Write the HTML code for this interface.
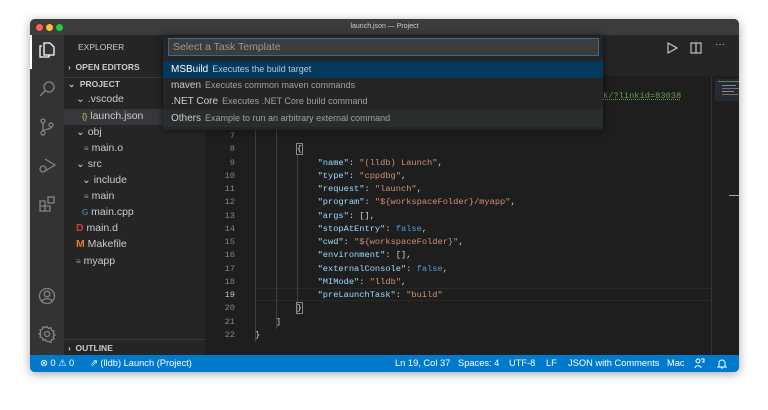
<!DOCTYPE html>
<html><head><meta charset="utf-8"><style>
*{margin:0;padding:0;box-sizing:border-box}
body{width:768px;height:410px;background:#fff;position:relative;overflow:hidden;font-family:"Liberation Sans",sans-serif}
.win{position:absolute;left:30px;top:19px;width:709px;height:353px;background:#1e1e1e;border-radius:5px;overflow:hidden;box-shadow:0 2px 10px rgba(0,0,0,.35)}
.title{position:absolute;left:0;top:0;width:100%;height:16px;background:#3c3c3c;color:#ccc;font-size:7px;text-align:center;line-height:16px}
.dot{position:absolute;top:5px;width:7px;height:7px;border-radius:50%}
.act{position:absolute;left:0;top:16px;width:34px;height:320px;background:#333}
.act svg{position:absolute;left:8px}
.side{position:absolute;left:34px;top:16px;width:141px;height:320px;background:#252526;color:#ccc;font-size:10.5px}
.side div{position:absolute;white-space:nowrap}
.b{font-weight:bold;font-size:8.5px}
.tabs{position:absolute;left:175px;top:16px;width:534px;height:41px;background:#252526}
.ed{position:absolute;left:175px;top:57px;width:534px;height:279px;background:#1e1e1e}
.code{position:absolute;font-family:"Liberation Mono",monospace;font-size:8.7px;white-space:pre;line-height:13.27px}
.ln{color:#858585;text-align:right;width:30px}
.k{color:#9cdcfe}.s{color:#ce9178}.f{color:#569cd6}.p{color:#d4d4d4}
.status{position:absolute;left:0;top:336px;width:100%;height:17px;background:#007acc;color:#fff;font-size:9.3px;line-height:17px}
.status span{position:absolute;white-space:nowrap}
.qp{position:absolute;left:133px;top:17px;width:440px;height:94px;background:#252526;box-shadow:0 0 8px rgba(0,0,0,.6);font-size:10px;color:#ccc}
.qp .in{position:absolute;left:5px;top:2px;width:431px;height:18px;background:#3c3c3c;border:1px solid #3a6a8a;color:#999;line-height:16px;padding-left:4px;font-size:10.5px}
.qp .it{position:absolute;left:0;width:440px;height:16.5px;line-height:16.5px;padding-left:8px}
.qp .it i{font-style:normal;color:#a0a0a0;font-size:9px;margin-left:4px}
.btn{position:absolute;left:541px;top:291px;width:100px;height:27px;background:#0e639c;color:#fff;font-size:10px;text-align:center;line-height:27px}
</style></head><body>
<div class="win">
<div class="title">launch.json — Project
<div class="dot" style="left:6px;background:#fe5f57"></div><div class="dot" style="left:16px;background:#febc2e"></div><div class="dot" style="left:26px;background:#28c840"></div></div>
<div class="act">
<div style="position:absolute;left:0;top:0;width:2px;height:34px;background:#fff"></div>
<svg style="top:6px" width="18" height="18" viewBox="0 0 18 18" fill="none" stroke="#fff" stroke-width="1.3"><path d="M6 2h6l4 4v8H6z M4 5H2v11h9v-2"/></svg>
<svg style="top:45px" width="18" height="18" viewBox="0 0 18 18" fill="none" stroke="#858585" stroke-width="1.3"><circle cx="11" cy="7" r="5"/><path d="M7.5 10.5L2 16"/></svg>
<svg style="top:83px" width="18" height="18" viewBox="0 0 18 18" fill="none" stroke="#858585" stroke-width="1.3"><circle cx="5" cy="3" r="2"/><circle cx="5" cy="15" r="2"/><circle cx="13" cy="7" r="2"/><path d="M5 5v8M13 9c0 3-8 2-8 4"/></svg>
<svg style="top:121px" width="18" height="18" viewBox="0 0 18 18" fill="none" stroke="#858585" stroke-width="1.3"><path d="M7 3l10 6-10 6"/><circle cx="5" cy="13" r="3"/></svg>
<svg style="top:160px" width="18" height="18" viewBox="0 0 18 18" fill="none" stroke="#858585" stroke-width="1.3"><path d="M2 6h5v5H2zM2 11h5v5H2zM7 11h5v5H7z"/><rect x="10" y="2" width="6" height="6"/></svg>
<svg style="top:252px" width="18" height="18" viewBox="0 0 18 18" fill="none" stroke="#858585" stroke-width="1.3"><circle cx="9" cy="9" r="7.5"/><circle cx="9" cy="7" r="2.8"/><path d="M4 14c2-3 8-3 10 0"/></svg>
<svg style="top:290px" width="18" height="18" viewBox="0 0 18 18" fill="none" stroke="#858585" stroke-width="1.3"><circle cx="9" cy="9" r="2.5"/><path d="M9 1.5l1.5 2 2.5-.8.5 2.5 2.5.8-.8 2.5 1.8 1.5-1.8 1.5.8 2.5-2.5.8-.5 2.5-2.5-.8L9 16.5l-1.5-2-2.5.8-.5-2.5-2.5-.8.8-2.5L1 9l1.8-1.5L2 5l2.5-.8.5-2.5 2.5.8z"/></svg>
</div>
<div class="side">
<div style="left:14px;top:7px;font-size:8.5px">EXPLORER</div>
<div class="b" style="left:4px;top:27px">›&nbsp; OPEN EDITORS</div>
<div style="left:0;top:42px;width:141px;height:1px;background:#3a3a3a"></div>
<div class="b" style="left:4px;top:44px">⌄&nbsp; PROJECT</div>
<div style="left:12px;top:58px">⌄ .vscode</div>
<div style="left:0;top:74px;width:141px;height:16px;background:#37373d"></div>
<div style="left:18px;top:75px"><span style="color:#cbcb41;font-size:8px">{}</span> launch.json</div>
<div style="left:12px;top:91px">⌄ obj</div>
<div style="left:20px;top:107px"><span style="color:#999;font-size:8px">≡</span> main.o</div>
<div style="left:12px;top:123px">⌄ src</div>
<div style="left:18px;top:139px">⌄ include</div>
<div style="left:20px;top:155px"><span style="color:#999;font-size:8px">≡</span> main</div>
<div style="left:18px;top:171px"><span style="color:#519aba;font-size:8px">G</span> main.cpp</div>
<div style="left:12px;top:187px"><span style="color:#cc3e44;font-weight:bold">D</span> main.d</div>
<div style="left:12px;top:203px"><span style="color:#e37933;font-weight:bold">M</span> Makefile</div>
<div style="left:12px;top:220px"><span style="color:#999;font-size:8px">≡</span> myapp</div>
<div style="left:0;top:304px;width:141px;height:1px;background:#3a3a3a"></div>
<div class="b" style="left:4px;top:308px">›&nbsp; OUTLINE</div>
</div>
<div class="tabs">
<svg style="position:absolute;left:461px;top:7px" width="12" height="12" viewBox="0 0 12 12" fill="none" stroke="#ccc" stroke-width="1.1"><path d="M2 1l9 5-9 5z"/></svg>
<svg style="position:absolute;left:485px;top:7px" width="12" height="12" viewBox="0 0 12 12" fill="none" stroke="#ccc" stroke-width="1.1"><rect x="1" y="1" width="10" height="10"/><path d="M6 1v10"/></svg>
<div style="position:absolute;left:510px;top:4px;color:#ccc;font-size:10px">···</div>
</div>
<div class="ed">
<div class="code" style="left:398px;top:14px;color:#6a9955;text-decoration:underline dotted">k/?linkid=83038</div>
<div style="position:absolute;left:506px;top:0;width:1px;height:279px;background:#333"></div>
<div style="position:absolute;left:507px;top:0;width:48px;height:279px;background:#1e1e1e"></div>
<div style="position:absolute;left:510px;top:3px;width:40px;height:22px;background:#262b31"></div>
<div style="position:absolute;left:513px;top:5px;width:25px;height:1px;background:#6a7a60"></div>
<div style="position:absolute;left:517px;top:9px;width:14px;height:1px;background:#9cdcfe;opacity:.6"></div>
<div style="position:absolute;left:517px;top:12px;width:18px;height:1px;background:#ce9178;opacity:.6"></div>
<div style="position:absolute;left:517px;top:15px;width:12px;height:1px;background:#9cdcfe;opacity:.6"></div>
<div style="position:absolute;left:517px;top:18px;width:16px;height:1px;background:#ce9178;opacity:.6"></div>
<div style="position:absolute;left:524px;top:119px;width:10px;height:1px;background:#aaa"></div>
<div class="code ln" style="left:0;top:54px">7
8
9
10
11
12
13
14
15
16
17
18
<span style="color:#c6c6c6">19</span>
20
21
22</div>
<div style="position:absolute;left:50px;top:212px;width:456px;height:13px;border-top:1px solid #282828;border-bottom:1px solid #282828"></div>
<div style="position:absolute;left:50px;top:54px;width:1px;height:212px;background:#404040"></div>
<div style="position:absolute;left:71px;top:54px;width:1px;height:199px;background:#404040"></div>
<div style="position:absolute;left:92px;top:80px;width:1px;height:159px;background:#404040"></div>
<div class="code p" style="left:50px;top:54px">
        <span style="outline:1px solid #888">{</span>
            <span class="k">"name"</span>: <span class="s">"(lldb) Launch"</span>,
            <span class="k">"type"</span>: <span class="s">"cppdbg"</span>,
            <span class="k">"request"</span>: <span class="s">"launch"</span>,
            <span class="k">"program"</span>: <span class="s">"${workspaceFolder}/myapp"</span>,
            <span class="k">"args"</span>: [],
            <span class="k">"stopAtEntry"</span>: <span class="f">false</span>,
            <span class="k">"cwd"</span>: <span class="s">"${workspaceFolder}"</span>,
            <span class="k">"environment"</span>: [],
            <span class="k">"externalConsole"</span>: <span class="f">false</span>,
            <span class="k">"MIMode"</span>: <span class="s">"lldb"</span>,
            <span class="k">"preLaunchTask"</span>: <span class="s">"build"</span>
        <span style="outline:1px solid #888">}</span>
    ]
}</div>
<div class="btn">Add Configuration...</div>
</div>
<div class="qp">
<div class="in">Select a Task Template</div>
<div class="it" style="top:25px;background:#04395e;color:#fff">MSBuild<i style="color:#b5c8d8">Executes the build target</i></div>
<div class="it" style="top:41px">maven<i>Executes common maven commands</i></div>
<div class="it" style="top:57px">.NET Core<i>Executes .NET Core build command</i></div>
<div class="it" style="top:74px;background:#2a2d2e">Others<i>Example to run an arbitrary external command</i></div>
</div>
<div class="status">
<span style="left:10px">⊗ 0 ⚠ 0</span>
<span style="left:60px">⇗ (lldb) Launch (Project)</span>
<span style="left:365px">Ln 19, Col 37</span>
<span style="left:428px">Spaces: 4</span>
<span style="left:479px">UTF-8</span>
<span style="left:516px">LF</span>
<span style="left:538px">JSON with Comments</span>
<span style="left:637px">Mac</span>
<svg style="position:absolute;left:664px;top:3px" width="11" height="11" viewBox="0 0 11 11" fill="none" stroke="#fff" stroke-width="1"><circle cx="4" cy="3" r="2"/><path d="M1 10c0-3 6-3 6 0M7 1h3v3h-2"/></svg>
<svg style="position:absolute;left:687px;top:3px" width="10" height="11" viewBox="0 0 10 11" fill="none" stroke="#fff" stroke-width="1"><path d="M2 8V5a3 3 0 016 0v3l1 1H1zM4 10h2"/></svg>
</div>
</div>
</body></html>
